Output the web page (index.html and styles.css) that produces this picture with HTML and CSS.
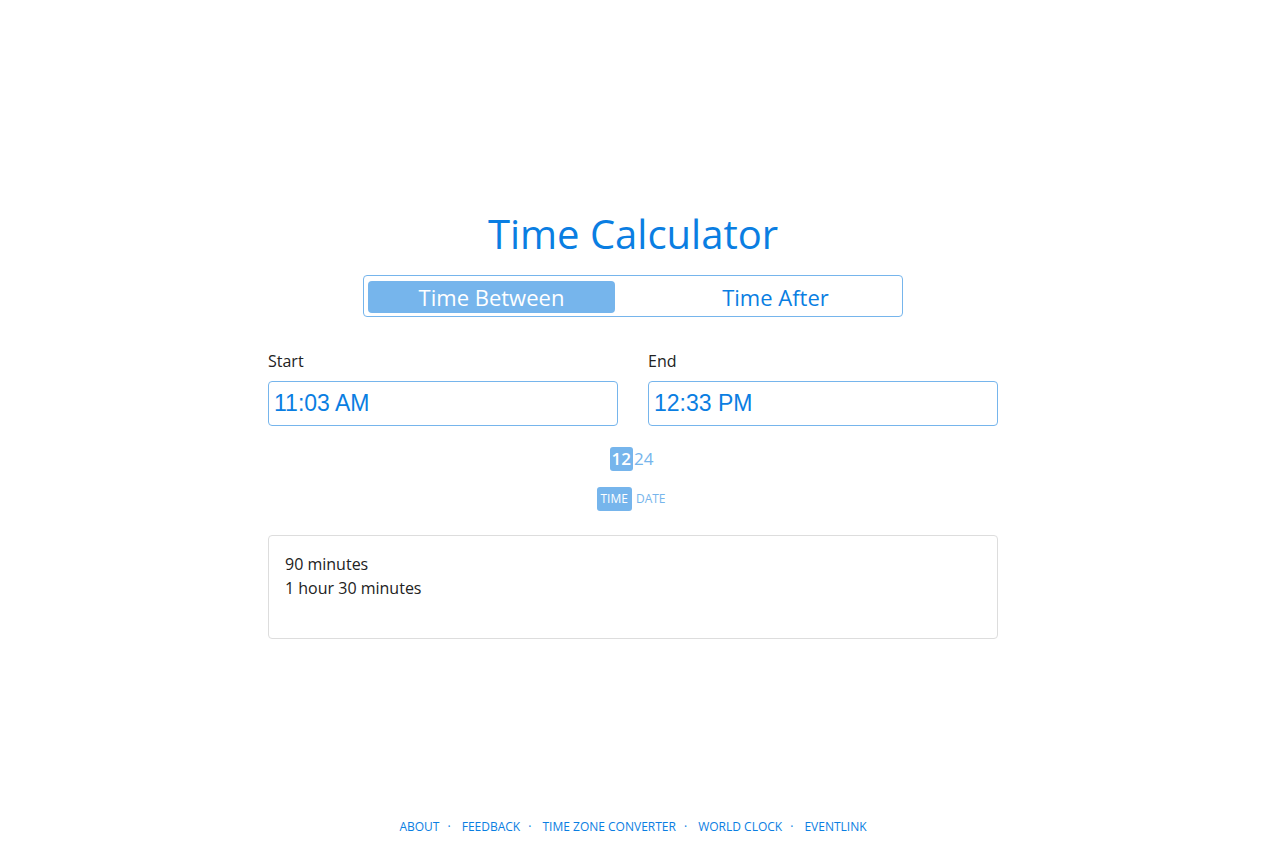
FILE: index.html
```html
<!DOCTYPE html>
<html lang="en">
<head>
    <meta charset="UTF-8">
    <meta name="viewport" content="width=device-width, initial-scale=1.0">
    <title>Time Calculator</title>
    <link rel="stylesheet" href="styles.css">
</head>
<body>
    <main class="calc">
        <h1 class="title">Time Calculator</h1>
        <div class="tabs">
            <span class="tab active">Time Between</span>
            <span class="tab other">Time After</span>
        </div>
        <div class="fields">
            <label class="field">
                <span class="label">Start</span>
                <input class="time-input" type="text" value="11:03 AM">
            </label>
            <label class="field">
                <span class="label">End</span>
                <input class="time-input" type="text" value="12:33 PM">
            </label>
        </div>
        <div class="toggle hours">
            <span class="opt on">12</span><span class="opt">24</span>
        </div>
        <div class="toggle mode">
            <span class="opt on">TIME</span><span class="opt">DATE</span>
        </div>
        <div class="result">
            <p>90 minutes</p>
            <p>1 hour 30 minutes</p>
        </div>
    </main>
    <footer class="footer">
        <a href="#">ABOUT</a><span class="dot">·</span>
        <a href="#">FEEDBACK</a><span class="dot">·</span>
        <a href="#">TIME ZONE CONVERTER</a><span class="dot">·</span>
        <a href="#">WORLD CLOCK</a><span class="dot">·</span>
        <a href="#">EVENTLINK</a>
    </footer>
</body>
</html>
```

FILE: styles.css
```css
body {
    font-family: "Open Sans", "Noto Sans", sans-serif;
    margin: 0;
    padding-right: 2px;
    min-height: 100vh;
    display: flex;
    flex-direction: column;
    align-items: center;
    background-color: #ffffff;
    color: #222222;
}
.calc {
    width: 730px;
    padding-top: 204px;
    display: flex;
    flex-direction: column;
    align-items: center;
}
.title {
    margin: 0;
    font-size: 40px;
    font-weight: 400;
    line-height: 60px;
    color: #0a7ee2;
}
.tabs {
    margin-top: 11px;
    width: 530px;
    height: 32px;
    padding: 5px 4px 3px;
    border: 1px solid #76b5ec;
    border-radius: 4px;
    display: flex;
    align-items: center;
}
.tab {
    font-size: 22px;
    line-height: 32px;
    text-align: center;
    color: #0a7ee2;
}
.tab.active {
    width: 247px;
    background-color: #76b5ec;
    color: #ffffff;
    border-radius: 4px;
}
.tab.other {
    flex: 1;
    padding-left: 38px;
}
.fields {
    margin-top: 32px;
    width: 100%;
    display: flex;
    gap: 30px;
}
.field {
    flex: 1;
    display: flex;
    flex-direction: column;
}
.label {
    font-size: 16px;
    line-height: 24px;
    margin-bottom: 8px;
}
.time-input {
    box-sizing: border-box;
    height: 45px;
    width: 100%;
    margin: 0;
    padding: 0 5px;
    border: 1px solid #76b5ec;
    border-radius: 4px;
    font-family: "Liberation Sans", Arial, sans-serif;
    font-size: 23px;
    color: #0a7ee2;
    outline: none;
}
.toggle {
    display: flex;
    color: #76b5ec;
}
.toggle .opt.on {
    background-color: #76b5ec;
    color: #ffffff;
    border-radius: 3px;
}
.hours {
    margin-top: 21px;
    font-size: 17px;
    line-height: 24px;
    padding-right: 3px;
}
.hours .opt.on {
    padding: 0 2px;
    margin-right: 1px;
    font-weight: 600;
}
.mode {
    margin-top: 16px;
    font-size: 12px;
    line-height: 24px;
}
.mode .opt {
    padding: 0 4px;
}
.result {
    box-sizing: border-box;
    margin-top: 24px;
    width: 100%;
    height: 104px;
    padding: 16px;
    border: 1px solid #dddddd;
    border-radius: 4px;
    font-size: 16px;
    line-height: 24px;
}
.result p {
    margin: 0;
}
.footer {
    margin-top: auto;
    padding-bottom: 7px;
    font-size: 12px;
    line-height: 20px;
}
.footer a {
    color: #0a7ee2;
    text-decoration: none;
}
.dot {
    color: #0a7ee2;
    margin: 0 8px;
}
```
